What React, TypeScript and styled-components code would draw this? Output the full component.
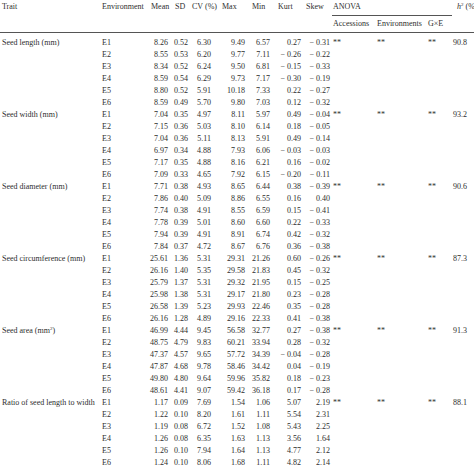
import React from "react";
import styled, { createGlobalStyle } from "styled-components";

const Global = createGlobalStyle`
  html, body { margin: 0; padding: 0; background: #fff; }
  body { overflow: hidden; }
`;

type Col = { w: number; hp: number; align: "left" | "right"; pad: number };

const cols: Col[] = [
  { w: 100, hp: 2, align: "left", pad: 2 },
  { w: 50, hp: 2, align: "left", pad: 2 },
  { w: 20, hp: 1, align: "right", pad: 2 },
  { w: 20, hp: 5, align: "right", pad: 2 },
  { w: 27, hp: 2, align: "right", pad: 6 },
  { w: 30, hp: 5, align: "right", pad: 2 },
  { w: 28, hp: 5, align: "right", pad: 5 },
  { w: 28, hp: 3, align: "right", pad: 2 },
  { w: 29, hp: 3, align: "right", pad: 2 },
  { w: 44, hp: 1, align: "left", pad: 1 },
  { w: 51, hp: 1, align: "left", pad: 1 },
  { w: 25, hp: 1, align: "left", pad: 1 },
  { w: 22, hp: 5, align: "left", pad: 1 },
];

type Group = {
  trait: React.ReactNode;
  h2: string;
  rows: string[][];
};

const SupText = styled.sup`
  font-size: 5px;
  vertical-align: 3px;
  line-height: 0;
`;

function Sup({ children }: { children: React.ReactNode }) {
  return <SupText>{children}</SupText>;
}

const groups: Group[] = [
  {
    trait: "Seed length (mm)",
    h2: "90.8",
    rows: [
      ["8.26", "0.52", "6.30", "9.49", "6.57", "0.27", "−0.31"],
      ["8.55", "0.53", "6.20", "9.77", "7.11", "−0.26", "−0.22"],
      ["8.34", "0.52", "6.24", "9.50", "6.81", "−0.15", "−0.33"],
      ["8.59", "0.54", "6.29", "9.73", "7.17", "−0.30", "−0.19"],
      ["8.80", "0.52", "5.91", "10.18", "7.33", "0.22", "−0.27"],
      ["8.59", "0.49", "5.70", "9.80", "7.03", "0.12", "−0.32"],
    ],
  },
  {
    trait: "Seed width (mm)",
    h2: "93.2",
    rows: [
      ["7.04", "0.35", "4.97", "8.11", "5.97", "0.49", "−0.04"],
      ["7.15", "0.36", "5.03", "8.10", "6.14", "0.18", "−0.05"],
      ["7.04", "0.36", "5.11", "8.13", "5.91", "0.49", "−0.14"],
      ["6.97", "0.34", "4.88", "7.93", "6.06", "−0.03", "−0.03"],
      ["7.17", "0.35", "4.88", "8.16", "6.21", "0.16", "−0.02"],
      ["7.09", "0.33", "4.65", "7.92", "6.15", "−0.20", "−0.11"],
    ],
  },
  {
    trait: "Seed diameter (mm)",
    h2: "90.6",
    rows: [
      ["7.71", "0.38", "4.93", "8.65", "6.44", "0.38", "−0.39"],
      ["7.86", "0.40", "5.09", "8.86", "6.55", "0.16", "0.40"],
      ["7.74", "0.38", "4.91", "8.55", "6.59", "0.15", "−0.41"],
      ["7.78", "0.39", "5.01", "8.60", "6.60", "0.22", "−0.33"],
      ["7.94", "0.39", "4.91", "8.91", "6.74", "0.42", "−0.32"],
      ["7.84", "0.37", "4.72", "8.67", "6.76", "0.36", "−0.38"],
    ],
  },
  {
    trait: "Seed circumference (mm)",
    h2: "87.3",
    rows: [
      ["25.61", "1.36", "5.31", "29.31", "21.26", "0.60", "−0.26"],
      ["26.16", "1.40", "5.35", "29.58", "21.83", "0.45", "−0.32"],
      ["25.79", "1.37", "5.31", "29.32", "21.95", "0.15", "−0.25"],
      ["25.98", "1.38", "5.31", "29.17", "21.80", "0.23", "−0.28"],
      ["26.58", "1.39", "5.23", "29.93", "22.46", "0.35", "−0.28"],
      ["26.16", "1.28", "4.89", "29.16", "22.33", "0.41", "−0.38"],
    ],
  },
  {
    trait: (
      <>
        Seed area (mm<Sup>2</Sup>)
      </>
    ),
    h2: "91.3",
    rows: [
      ["46.99", "4.44", "9.45", "56.58", "32.77", "0.27", "−0.38"],
      ["48.75", "4.79", "9.83", "60.21", "33.94", "0.28", "−0.32"],
      ["47.37", "4.57", "9.65", "57.72", "34.39", "−0.04", "−0.28"],
      ["47.87", "4.68", "9.78", "58.46", "34.42", "0.04", "−0.19"],
      ["49.80", "4.80", "9.64", "59.96", "35.82", "0.18", "−0.23"],
      ["48.61", "4.41", "9.07", "59.42", "36.18", "0.17", "−0.28"],
    ],
  },
  {
    trait: "Ratio of seed length to width",
    h2: "88.1",
    rows: [
      ["1.17", "0.09", "7.69", "1.54", "1.06", "5.07", "2.19"],
      ["1.22", "0.10", "8.20", "1.61", "1.11", "5.54", "2.31"],
      ["1.19", "0.08", "6.72", "1.52", "1.08", "5.43", "2.25"],
      ["1.26", "0.08", "6.35", "1.63", "1.13", "3.56", "1.64"],
      ["1.26", "0.10", "7.94", "1.64", "1.13", "4.77", "2.12"],
      ["1.24", "0.10", "8.06", "1.68", "1.11", "4.82", "2.14"],
    ],
  },
];

const Page = styled.div`
  width: 474px;
  height: 470px;
  overflow: hidden;
  background: #fff;
`;

const Table = styled.table`
  border-collapse: collapse;
  table-layout: fixed;
  width: 474px;
  font-family: "Liberation Serif", "Times New Roman", serif;
  font-size: 8px;
  color: #2e2e2e;
  white-space: nowrap;
`;

const HeadCell = styled.th<{ $pl: number; $line?: boolean }>`
  font-weight: normal;
  text-align: left;
  vertical-align: top;
  padding: 2px 0 0 ${(p) => p.$pl}px;
  height: 15px;
  line-height: 10px;
  box-sizing: border-box;
  overflow: visible;
  border-bottom: ${(p) => (p.$line ? "1px solid #555" : "none")};
`;

const SubHeadCell = styled.th<{ $pl: number }>`
  font-weight: normal;
  text-align: left;
  vertical-align: middle;
  padding: 0 0 0 ${(p) => p.$pl}px;
  height: 16px;
  line-height: 10px;
`;

const HeadRow = styled.tr<{ $rule?: boolean }>`
  border-bottom: ${(p) => (p.$rule ? "1px solid #555" : "none")};
`;

const Row = styled.tr``;

const Cell = styled.td<{ $align: "left" | "right"; $pad: number; $first?: boolean }>`
  text-align: ${(p) => p.$align};
  padding: ${(p) => (p.$first ? 4 : 0)}px
    ${(p) => (p.$align === "right" ? p.$pad : 0)}px 0
    ${(p) => (p.$align === "left" ? p.$pad : 0)}px;
  height: 12px;
  line-height: 12px;
  vertical-align: bottom;
  overflow: visible;
`;

const Italic = styled.i`
  font-style: italic;
`;

function fmt(v: string) {
  return v.startsWith("−") ? "− " + v.slice(1) : v;
}

export default function App() {
  const heads = ["Trait", "Environment", "Mean", "SD", "CV (%)", "Max", "Min", "Kurt", "Skew"];
  let rowIndex = 0;
  return (
    <Page>
      <Global />
      <Table>
        <colgroup>
          {cols.map((c, i) => (
            <col key={i} style={{ width: c.w }} />
          ))}
        </colgroup>
        <thead>
          <HeadRow>
            {heads.map((h, i) => (
              <HeadCell key={h} rowSpan={2} $pl={cols[i].hp}>
                {h}
              </HeadCell>
            ))}
            <HeadCell colSpan={3} $pl={1} $line>
              ANOVA
            </HeadCell>
            <HeadCell rowSpan={2} $pl={cols[12].hp}>
              <Italic>h</Italic>
              <Sup>2</Sup> (%)
            </HeadCell>
          </HeadRow>
          <HeadRow $rule>
            <SubHeadCell $pl={1}>Accessions</SubHeadCell>
            <SubHeadCell $pl={1}>Environments</SubHeadCell>
            <SubHeadCell $pl={1}>G×E</SubHeadCell>
          </HeadRow>
        </thead>
        <tbody>
          {groups.map((g, gi) =>
            g.rows.map((r, ri) => {
              const first = rowIndex === 0;
              rowIndex++;
              const values: React.ReactNode[] = [
                ri === 0 ? g.trait : "",
                `E${ri + 1}`,
                ...r.map(fmt),
                ri === 0 ? "**" : "",
                ri === 0 ? "**" : "",
                ri === 0 ? "**" : "",
                ri === 0 ? g.h2 : "",
              ];
              return (
                <Row key={`${gi}-${ri}`}>
                  {values.map((v, ci) => (
                    <Cell key={ci} $align={cols[ci].align} $pad={cols[ci].pad} $first={first}>
                      {v}
                    </Cell>
                  ))}
                </Row>
              );
            })
          )}
        </tbody>
      </Table>
    </Page>
  );
}
